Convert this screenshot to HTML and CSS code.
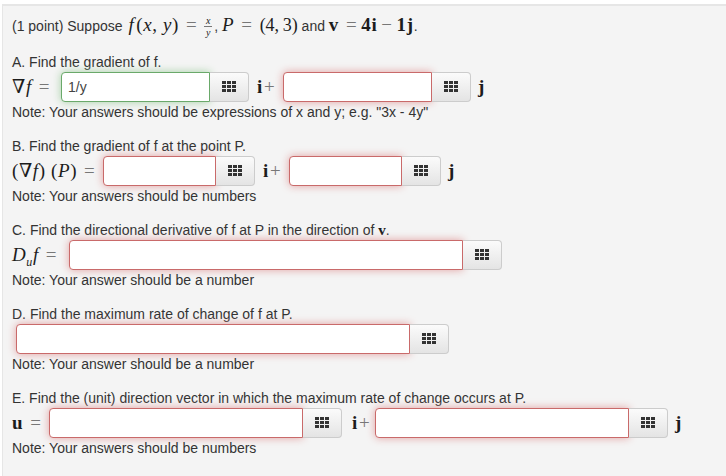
FILE: index.html
```html
<!DOCTYPE html>
<html lang="en">
<head>
  <meta charset="UTF-8" />
  <title>Gradient problem</title>
  <link rel="stylesheet" href="styles.css">
</head>
<body>
  <svg class="defs" width="0" height="0">
    <symbol id="grid" viewBox="0 0 14 12">
      <path d="M0 0h4v3H0zM5 0h4v3H5zM10 0h4v3h-4zM0 4h4v3H0zM5 4h4v3H5zM10 4h4v3h-4zM0 8h4v3H0zM5 8h4v3H5zM10 8h4v3h-4z" />
    </symbol>
  </svg>
  <div class="problem">
    <p class="intro">(1 point) Suppose <span class="math f-gap"><i class="fn">f</i>(<i>x</i>, <i>y</i>)<span class="eq">=</span><span class="frac"><i>x</i><i>y</i></span></span>, <span class="math"><i>P</i><span class="eq">=</span><span class="point">(4,&thinsp;3)</span></span> and <span class="math"><b>v</b><span class="eq short">=</span><b>4i</b><span class="eq tight">−</span><b>1j</b></span>.</p>

    <section class="part">
      <p>A. Find the gradient of f.</p>
      <div class="row">
        <span class="math lead lead-a">∇<i>f</i><span class="eq">=</span></span>
        <div class="group w-a"><input class="ok" type="text" value="1/y"><button><svg><use href="#grid"/></svg></button></div>
        <span class="math unit"><b>i</b><span class="plus">+</span></span>
        <div class="group w-a"><input class="bad" type="text"><button><svg><use href="#grid"/></svg></button></div>
        <span class="math end"><b>j</b></span>
      </div>
      <p>Note: Your answers should be expressions of x and y; e.g. "3x - 4y"</p>
    </section>

    <section class="part">
      <p>B. Find the gradient of f at the point P.</p>
      <div class="row">
        <span class="math lead lead-b">(∇<i>f</i>) (<i>P</i>)<span class="eq">=</span></span>
        <div class="group w-b"><input class="bad" type="text"><button><svg><use href="#grid"/></svg></button></div>
        <span class="math unit"><b>i</b><span class="plus">+</span></span>
        <div class="group w-b"><input class="bad" type="text"><button><svg><use href="#grid"/></svg></button></div>
        <span class="math end"><b>j</b></span>
      </div>
      <p>Note: Your answers should be numbers</p>
    </section>

    <section class="part">
      <p>C. Find the directional derivative of f at P in the direction of <b class="inline-v">v</b>.</p>
      <div class="row">
        <span class="math lead lead-c"><i>D</i><sub>u</sub><i>f</i><span class="eq">=</span></span>
        <div class="group w-c"><input class="bad" type="text"><button><svg><use href="#grid"/></svg></button></div>
      </div>
      <p>Note: Your answer should be a number</p>
    </section>

    <section class="part">
      <p>D. Find the maximum rate of change of f at P.</p>
      <div class="row row-d">
        <div class="group w-c"><input class="bad" type="text"><button><svg><use href="#grid"/></svg></button></div>
      </div>
      <p>Note: Your answer should be a number</p>
    </section>

    <section class="part">
      <p>E. Find the (unit) direction vector in which the maximum rate of change occurs at P.</p>
      <div class="row">
        <span class="math lead lead-e"><b>u</b><span class="eq">=</span></span>
        <div class="group w-e"><input class="bad" type="text"><button><svg><use href="#grid"/></svg></button></div>
        <span class="math unit wide"><b>i</b><span class="plus">+</span></span>
        <div class="group w-e"><input class="bad" type="text"><button><svg><use href="#grid"/></svg></button></div>
        <span class="math end"><b>j</b></span>
      </div>
      <p>Note: Your answers should be numbers</p>
    </section>
  </div>
</body>
</html>
```

FILE: styles.css
```css
html, body {
  margin: 0;
  height: 476px;
  overflow: hidden;
  background: #fff;
}
body {
  font-family: "Liberation Sans", Arial, sans-serif;
  font-size: 14px;
  line-height: 20px;
  color: #333;
}
.defs {
  position: absolute;
}
.problem {
  margin: 4px 0 0 2px;
  padding: 9px 0 0 9px;
  height: 472px;
  box-sizing: border-box;
  background: #f4f4f4;
  border-top: 2px solid #e6e6e6;
  border-left: 1px solid #e6e6e6;
}
p {
  margin: 0;
}
.intro {
  height: 37px;
  white-space: nowrap;
}
.part {
  margin-bottom: 14px;
}
.row {
  display: flex;
  align-items: center;
  height: 30px;
}
.row-d {
  margin-left: 4px;
}
.math {
  font-family: "Liberation Serif", "DejaVu Serif", serif;
  font-size: 19px;
  letter-spacing: 0.6px;
  color: #1c1c1c;
  white-space: nowrap;
}
.f-gap {
  margin-left: 2px;
}
.fn {
  margin-right: 2px;
}
.point {
  font-size: 18px;
  letter-spacing: 0;
}
.math sub {
  font-size: 12px;
  font-style: italic;
  line-height: 0;
}
.inline-v {
  font-family: "Liberation Serif", serif;
  font-size: 15px;
  color: #1c1c1c;
}
.eq {
  margin: 0 7px;
  color: #777;
}
.eq.short {
  margin-right: 4px;
}
.eq.tight {
  margin: 0 4px;
}
.plus {
  color: #777;
  margin-left: 1px;
}
.frac {
  display: inline-flex;
  flex-direction: column;
  vertical-align: middle;
  width: 8px;
  margin-right: 2px;
  font-size: 10px;
  letter-spacing: 0;
  line-height: 11px;
  text-align: center;
}
.frac i:first-child {
  border-bottom: 1px solid #777;
}
.lead {
  flex: none;
}
.lead-a { width: 49px; }
.lead-b { width: 91px; }
.lead-c { width: 57px; }
.lead-e { width: 37px; }
.unit {
  flex: none;
  box-sizing: border-box;
  width: 34px;
  padding-left: 8px;
}
.unit.wide {
  width: 33px;
  padding-left: 10px;
}
.end {
  margin-left: 7px;
}
.group {
  display: flex;
  flex: none;
  height: 30px;
}
.group input {
  box-sizing: border-box;
  flex: 1;
  min-width: 0;
  height: 30px;
  padding: 0 6px;
  font: 14px "Liberation Sans", Arial, sans-serif;
  color: #444;
  background: #fff;
  border: 1px solid #ccc;
  border-radius: 4px 0 0 4px;
  outline: none;
}
.group input.ok {
  border-color: #6aa96a;
  box-shadow: 0 0 8px #a5d0a5;
}
.group input.bad {
  border-color: #c96a6a;
  box-shadow: 0 0 8px #e2a0a0;
}
.group button {
  box-sizing: border-box;
  width: 39px;
  height: 30px;
  margin: 0;
  padding: 0;
  display: flex;
  align-items: center;
  justify-content: center;
  background: linear-gradient(#fbfbfb, #e4e4e4);
  border: 1px solid #ccc;
  border-left: none;
  border-radius: 0 4px 4px 0;
}
.group svg {
  width: 14px;
  height: 12px;
  fill: #333;
}
.w-a { width: 188px; }
.w-b { width: 152px; }
.w-c { width: 432.5px; }
.w-e { width: 293px; }
```
